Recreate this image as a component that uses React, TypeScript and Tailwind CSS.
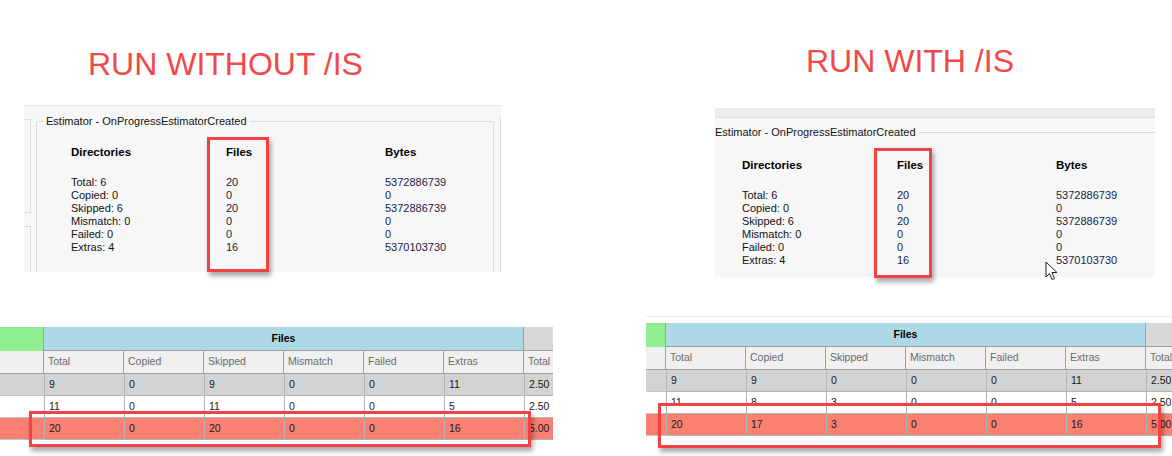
import type { ReactNode } from 'react'

const labels = ['Total: 6', 'Copied: 0', 'Skipped: 6', 'Mismatch: 0', 'Failed: 0', 'Extras: 4']
const files = ['20', '0', '20', '0', '0', '16']
const bytes = ['5372886739', '0', '5372886739', '0', '0', '5370103730']
const cols = ['Total', 'Copied', 'Skipped', 'Mismatch', 'Failed', 'Extras', 'Total']

type Row = { bg: string; cells: string[] }

const rowsWithout: Row[] = [
  { bg: 'bg-[#d3d3d3]', cells: ['9', '0', '9', '0', '0', '11', '2.50'] },
  { bg: 'bg-white', cells: ['11', '0', '11', '0', '0', '5', '2.50'] },
  { bg: 'bg-[#fa8072]', cells: ['20', '0', '20', '0', '0', '16', '5.00'] },
]

const rowsWith: Row[] = [
  { bg: 'bg-[#d3d3d3]', cells: ['9', '9', '0', '0', '0', '11', '2.50'] },
  { bg: 'bg-white', cells: ['11', '8', '3', '0', '0', '5', '2.50'] },
  { bg: 'bg-[#fa8072]', cells: ['20', '17', '3', '0', '0', '16', '5.00'] },
]

function Title({ children }: { children: ReactNode }) {
  return (
    <h1 className="font-['Liberation_Sans',Arial,sans-serif] text-[32px] leading-[36px] text-[#f24848] whitespace-nowrap">
      {children}
    </h1>
  )
}

// the stats block inside the "Estimator" group box
function Stats() {
  return (
    <div className="grid grid-cols-[155px_159px_100px] font-['Liberation_Sans',Arial,sans-serif] text-[11px] leading-[13px]">
      <div className="flex flex-col">
        <p className="font-bold text-[11.5px] text-black h-[30px]">Directories</p>
        {labels.map((l) => (
          <span key={l} className="text-[#141414] whitespace-nowrap">{l}</span>
        ))}
      </div>
      <div className="flex flex-col">
        <p className="font-bold text-[11.5px] text-black h-[30px]">Files</p>
        {files.map((f, i) => (
          <span key={i} className="text-[#1a1c44]">{f}</span>
        ))}
      </div>
      <div className="flex flex-col">
        <p className="font-bold text-[11.5px] text-black h-[30px]">Bytes</p>
        {bytes.map((b, i) => (
          <span key={i} className="text-[#1a1c44]">{b}</span>
        ))}
      </div>
    </div>
  )
}

function RedBox({ className }: { className: string }) {
  return (
    <div
      className={`absolute border-[3px] border-[#f04444] shadow-[2px_4px_5px_rgba(0,0,0,0.35)] pointer-events-none ${className}`}
    />
  )
}

function Table({ rows, first, className }: { rows: Row[]; first: number; className: string }) {
  const grid = first === 44 ? 'grid-cols-[44px_repeat(6,80px)_80px]' : 'grid-cols-[20px_repeat(6,80px)_80px]'
  return (
    <div className={`absolute overflow-hidden font-['Liberation_Sans',Arial,sans-serif] text-[10.5px] ${className}`}>
      <div className={`grid ${grid}`}>
        <div className="h-[24px] bg-[#90ee90] border-r border-[#a0a0a0]" />
        <div className="col-span-6 h-[24px] bg-[#add8e6] border-r border-b border-[#a0a0a0] flex items-center justify-center font-bold text-black">
          Files
        </div>
        <div className="h-[24px] bg-[#d8d8d8] border-b border-[#a0a0a0]" />

        <div className="h-[23px] bg-[#f0f0f0] border-r border-b border-[#a0a0a0]" />
        {cols.map((c, i) => (
          <div key={i} className="h-[23px] bg-[#f0f0f0] border-r border-b border-[#a0a0a0] flex items-center pl-[4px] text-[#6b6b6b]">
            {c}
          </div>
        ))}

        {rows.map((r, ri) => (
          <div key={ri} className="contents">
            <div className={`h-[22px] ${r.bg} border-b border-[#c4c4c4]`} />
            {r.cells.map((c, ci) => (
              <div key={ci} className={`h-[22px] ${r.bg} border-l border-b border-[#b4b4b4] flex items-center pl-[4px] text-[#1a1a1a]`}>
                {c}
              </div>
            ))}
          </div>
        ))}
      </div>
    </div>
  )
}

function Cursor() {
  return (
    <svg className="absolute left-[1045px] top-[261px]" width="14" height="21" viewBox="0 0 14 21">
      <path d="M1 1 L1 16 L4.5 12.5 L7 18.5 L9.5 17.5 L7 11.5 L12 11.5 Z" fill="#fff" stroke="#222" strokeWidth="1" strokeLinejoin="round" />
    </svg>
  )
}

export default function App() {
  return (
    <div className="relative w-[1172px] h-[456px] bg-white overflow-hidden">
      {/* titles */}
      <div className="absolute left-[88px] top-[46px]">
        <Title>RUN WITHOUT /IS</Title>
      </div>
      <div className="absolute left-[806px] top-[43px]">
        <Title>RUN WITH /IS</Title>
      </div>

      {/* top left screenshot */}
      <div className="absolute left-[24px] top-[105px] w-[477px] h-[167px] bg-[#f7f7f7] border-t border-[#e6e6e6] overflow-hidden">
        <div className="absolute left-0 top-[13px] w-[7px] h-[94px] border-r border-t border-b border-[#dcdcdc]" />
        <div className="absolute left-0 top-[120px] w-[7px] h-[60px] border-r border-t border-[#dcdcdc]" />
        <div className="absolute right-0 top-[12px] h-[160px] border-l border-[#dcdcdc]" />
        <div className="absolute left-[12px] top-[15px] w-[458px] h-[160px] border border-[#dcdcdc] rounded-[2px]">
          <span className="absolute left-[6px] -top-[8px] px-[3px] bg-[#f7f7f7] font-['Liberation_Sans',Arial,sans-serif] text-[11px] leading-[14px] text-[#141414] whitespace-nowrap">
            Estimator - OnProgressEstimatorCreated
          </span>
          <div className="absolute left-[34px] top-[24px]">
            <Stats />
          </div>
        </div>
      </div>
      <RedBox className="left-[207px] top-[137px] w-[62px] h-[135px]" />

      {/* top right screenshot */}
      <div className="absolute left-[715px] top-[108px] w-[440px] h-[10px] bg-[#ececec] border-b border-[#dedede]" />
      <div className="absolute left-[715px] top-[118px] w-[440px] h-[159px] bg-[#f7f7f7]">
        <div className="flex items-center gap-[3px] mt-[7px]">
          <span className="font-['Liberation_Sans',Arial,sans-serif] text-[11px] leading-[14px] text-[#141414] whitespace-nowrap">
            Estimator - OnProgressEstimatorCreated
          </span>
          <div className="flex-1 border-t border-[#d8d8d8]" />
        </div>
        <div className="ml-[27px] mt-[20px]">
          <Stats />
        </div>
      </div>
      <RedBox className="left-[874px] top-[148px] w-[58px] h-[130px]" />
      <Cursor />

      {/* bottom tables */}
      <Table rows={rowsWithout} first={44} className="left-0 top-[327px] w-[553px] h-[120px]" />
      <RedBox className="left-[29px] top-[411px] w-[502px] h-[36px]" />

      <div className="absolute left-[646px] top-[316px] w-[526px] border-t border-[#ececec]" />
      <Table rows={rowsWith} first={20} className="left-[646px] top-[323px] w-[526px] h-[120px]" />
      <RedBox className="left-[658px] top-[403px] w-[503px] h-[45px]" />
    </div>
  )
}
